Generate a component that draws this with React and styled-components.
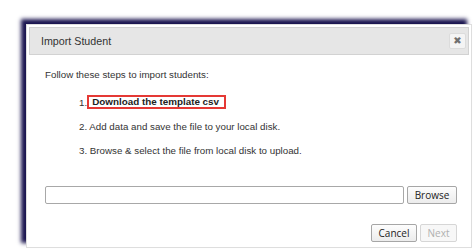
import React from "react";
import styled, { createGlobalStyle } from "styled-components";

const GlobalStyle = createGlobalStyle`
  html, body {
    margin: 0;
    padding: 0;
    background: #fff;
  }
  body {
    font-family: "Liberation Sans", Arial, sans-serif;
  }
`;

const Page = styled.div`
  width: 474px;
  height: 251px;
  overflow: hidden;
  padding: 24px 0 0 26px;
  box-sizing: border-box;
`;

const Dialog = styled.div`
  width: 446px;
  height: 224px;
  box-sizing: border-box;
  background: #fff;
  border: 1px solid #dedede;
  padding: 2px;
  box-shadow: -5px -5px 4px #1b1550;
  display: flex;
  flex-direction: column;
`;

const Header = styled.div`
  height: 28px;
  box-sizing: border-box;
  background: #e6e6e6;
  border: 1px solid #d2d2d2;
  display: flex;
  align-items: center;
  justify-content: space-between;
  padding: 0 2px 0 11px;
  font-size: 10.7px;
  color: #333;
`;

const CloseButton = styled.button`
  width: 17px;
  height: 16px;
  padding: 0;
  border: 1px solid #dcdcdc;
  background: #f4f4f4;
  border-radius: 2px;
  color: #707070;
  font-family: "DejaVu Sans", sans-serif;
  font-weight: bold;
  font-size: 10px;
  line-height: 14px;
  display: flex;
  align-items: center;
  justify-content: center;
`;

const Body = styled.div`
  padding: 13px 12px 0 16px;
  font-size: 9.75px;
  color: #333;
`;

const Intro = styled.div`
  line-height: 14px;
`;

const Steps = styled.div`
  margin-top: 8px;
  padding-left: 34px;
`;

const Step = styled.div`
  height: 24px;
  display: flex;
  align-items: center;
`;

const Highlight = styled.span`
  border: 2px solid #e53935;
  padding: 0 5px 0 3px;
  line-height: 10px;
  font-weight: bold;
  color: #222;
  font-size: 9.85px;
`;

const FileRow = styled.div`
  margin-top: 24px;
  display: flex;
  gap: 3px;
`;

const FileInput = styled.div`
  width: 359px;
  height: 18px;
  box-sizing: border-box;
  border: 1px solid #a8a8a8;
  border-radius: 2px;
  background: #fff;
`;

const Button = styled.button`
  width: ${({ w }) => w}px;
  height: 18px;
  box-sizing: border-box;
  padding: 0;
  border: 1px solid ${({ disabled }) => (disabled ? "#d6d6d6" : "#a6a6a6")};
  border-radius: 2px;
  background: ${({ disabled }) =>
    disabled ? "#f7f7f7" : "linear-gradient(#fdfdfd, #ececec)"};
  color: ${({ disabled }) => (disabled ? "#b0b0b0" : "#222")};
  font-family: "Open Sans", sans-serif;
  font-size: 10px;
  line-height: 16px;
`;

const Footer = styled.div`
  margin-top: 20px;
  display: flex;
  justify-content: flex-end;
  gap: 3px;
`;

export default function App() {
  return (
    <>
      <GlobalStyle />
      <Page>
        <Dialog>
          <Header>
            <span>Import Student</span>
            <CloseButton>✖</CloseButton>
          </Header>
          <Body>
            <Intro>Follow these steps to import students:</Intro>
            <Steps>
              <Step>
                1.<Highlight>Download the template csv</Highlight>
              </Step>
              <Step>2. Add data and save the file to your local disk.</Step>
              <Step>3. Browse &amp; select the file from local disk to upload.</Step>
            </Steps>
            <FileRow>
              <FileInput />
              <Button w={50}>Browse</Button>
            </FileRow>
            <Footer>
              <Button w={46}>Cancel</Button>
              <Button w={37} disabled>
                Next
              </Button>
            </Footer>
          </Body>
        </Dialog>
      </Page>
    </>
  );
}
